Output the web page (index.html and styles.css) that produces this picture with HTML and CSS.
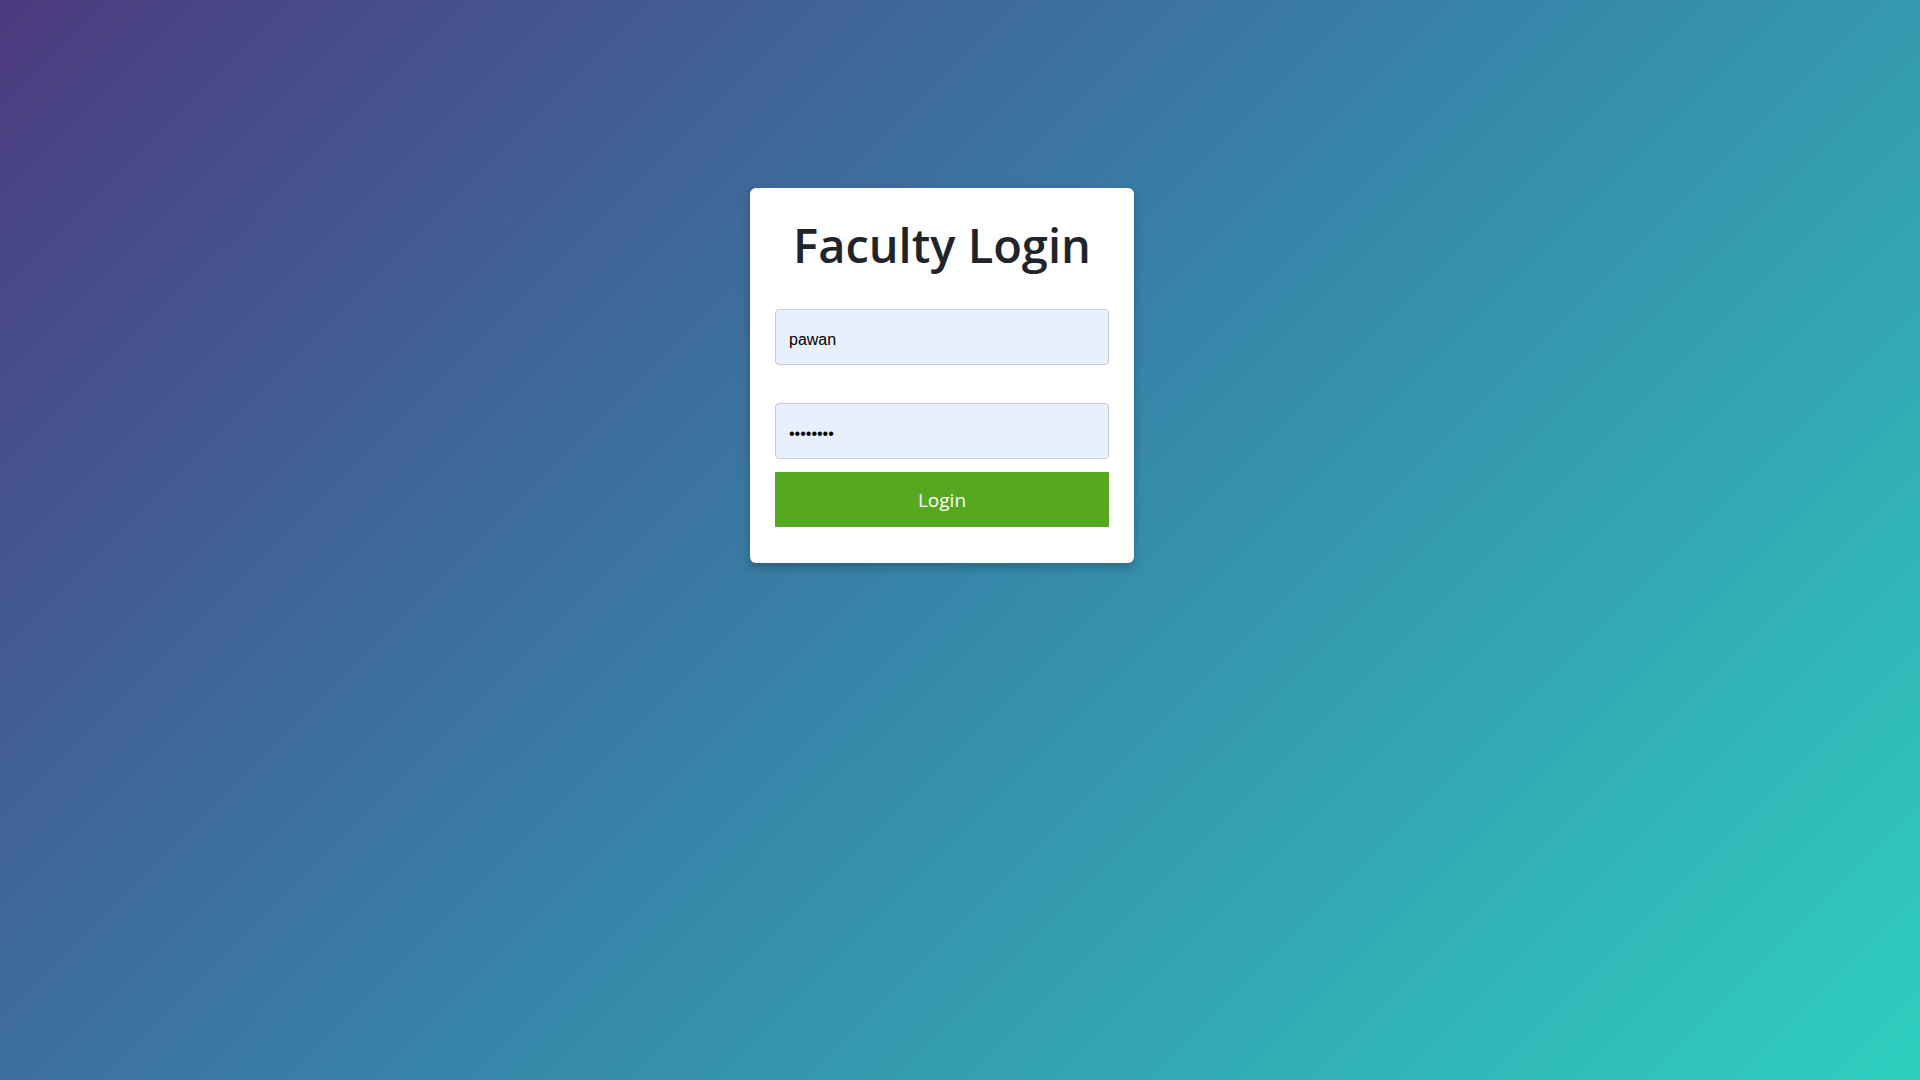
FILE: index.html
```html
<!DOCTYPE html>
<html lang="en">
<head>
<meta charset="utf-8">
<title>Faculty Login</title>
<link rel="stylesheet" href="styles.css">
</head>
<body>
<main class="page">
  <form class="card">
    <h1 class="title">Faculty Login</h1>
    <input class="field field-user" type="text" value="pawan">
    <input class="field field-pass" type="password" value="pawan123">
    <button class="btn" type="button">Login</button>
  </form>
</main>
</body>
</html>
```
FILE: styles.css
```css
* { box-sizing: border-box; }
html, body { margin: 0; height: 100%; }
body {
  background: linear-gradient(135deg, #4c3a7d 0%, #3784a8 50%, #2ecfbf 100%);
  font-family: "Open Sans", "Liberation Sans", sans-serif;
}
.page {
  min-height: 100vh;
  display: flex;
  justify-content: center;
  align-items: flex-start;
  padding: 188px 36px 0 0;
}
.card {
  width: 384px;
  background: #fff;
  border-radius: 6px;
  box-shadow: 0 4px 10px rgba(0, 0, 0, 0.25);
  padding: 24px 25px 36px;
  display: flex;
  flex-direction: column;
}
.title {
  margin: 0 0 31px;
  text-align: center;
  font-size: 47px;
  font-weight: 600;
  line-height: 66px;
  color: #212529;
}
.field {
  height: 56px;
  width: 100%;
  border: 1px solid #c9ccd1;
  border-radius: 4px;
  background: #e8f0fe;
  padding: 5px 13px 0;
  font-family: "Liberation Sans", Arial, sans-serif;
  font-size: 16px;
  color: #000;
  outline: none;
}
.field-user { margin-bottom: 38px; }
.field-pass { margin-bottom: 13px; }
.btn {
  height: 55px;
  border: 0;
  background: #56a820;
  color: #fff;
  font-family: "Open Sans", "Liberation Sans", sans-serif;
  font-size: 19px;
  cursor: pointer;
}
```
